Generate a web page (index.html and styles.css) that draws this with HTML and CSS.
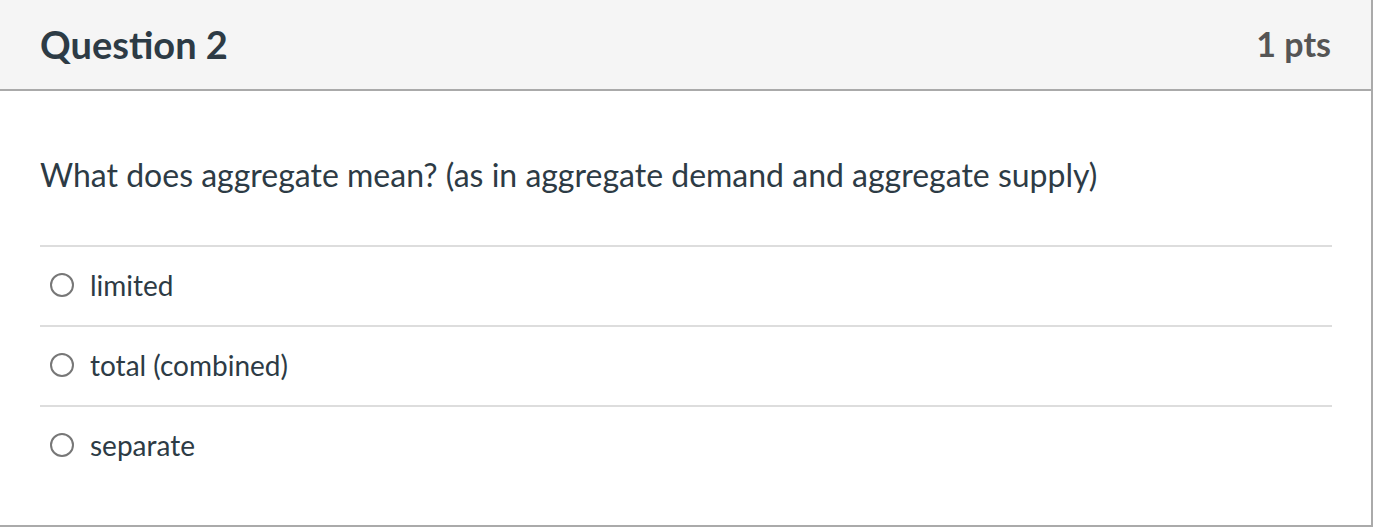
FILE: index.html
```html
<!DOCTYPE html>
<html lang="en">
<head>
<meta charset="utf-8">
<title>Question 2</title>
<link rel="stylesheet" href="styles.css">
</head>
<body>
<div class="question">
  <div class="question-header">
    <h2 class="question-title">Question 2</h2>
    <span class="question-points">1 pts</span>
  </div>
  <div class="question-body">
    <p class="question-text">What does aggregate mean? (as in aggregate demand and aggregate supply)</p>
    <div class="answers">
      <label class="answer"><span class="radio"></span><span class="answer-text">limited</span></label>
      <label class="answer"><span class="radio"></span><span class="answer-text">total (combined)</span></label>
      <label class="answer"><span class="radio"></span><span class="answer-text">separate</span></label>
    </div>
  </div>
</div>
</body>
</html>
```

FILE: styles.css
```css
html, body {
  margin: 0;
  padding: 0;
  background: #ffffff;
}

body {
  font-family: Lato, "Open Sans", "Liberation Sans", sans-serif;
  color: #2d3b45;
}

.question {
  border: 2px solid #aaaaaa;
  margin: -2px 3px 0 -2px;
  background: #ffffff;
}

.question-header {
  height: 91px;
  box-sizing: border-box;
  background: #f5f5f5;
  border-bottom: 2px solid #aaaaaa;
  display: flex;
  align-items: center;
  justify-content: space-between;
  padding: 0 40px 2px 40px;
}

.question-title {
  margin: 0;
  font-size: 38px;
  font-weight: 700;
  color: #2d3b45;
}

.question-points {
  font-size: 34px;
  font-weight: 700;
  color: #555555;
}

.question-body {
  padding: 0 39px 40px 40px;
}

.question-text {
  margin: 0;
  padding: 60px 0 46px;
  font-size: 32px;
  line-height: 48px;
}

.answers {
  display: flex;
  flex-direction: column;
}

.answer {
  display: flex;
  align-items: center;
  height: 80px;
  box-sizing: border-box;
  border-top: 2px solid #dddddd;
  padding: 0 0 2px 10px;
  gap: 16px;
}

.radio {
  width: 24px;
  height: 24px;
  box-sizing: border-box;
  border: 2px solid #777777;
  border-radius: 50%;
  flex: none;
}

.answer-text {
  font-size: 28px;
}
```
